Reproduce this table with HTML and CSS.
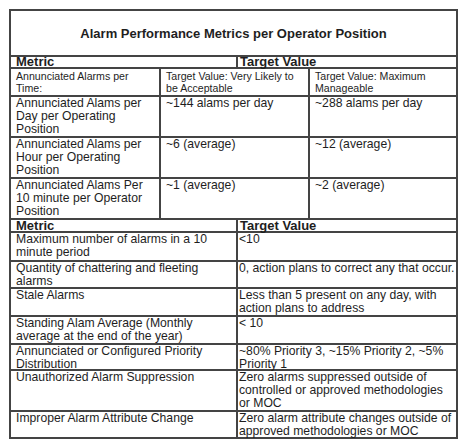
FILE: index.html
```html
<!DOCTYPE html>
<html>
<head>
<meta charset="utf-8">
<link rel="stylesheet" href="styles.css">
</head>
<body>
<div class="sheet">
  <div class="row title">Alarm Performance Metrics per Operator Position</div>
  <div class="row two head h12">
    <div class="cell">Metric</div>
    <div class="cell tv">Target Value</div>
  </div>
  <div class="row three sub h28">
    <div class="cell">Annunciated Alarms per Time:</div>
    <div class="cell">Target Value: Very Likely to be Acceptable</div>
    <div class="cell">Target Value: Maximum Manageable</div>
  </div>
  <div class="row three h41">
    <div class="cell">Annunciated Alams per Day per Operating Position</div>
    <div class="cell">~144 alams per day</div>
    <div class="cell">~288 alams per day</div>
  </div>
  <div class="row three h41">
    <div class="cell">Annunciated Alams per Hour per Operating Position</div>
    <div class="cell">~6 (average)</div>
    <div class="cell">~12 (average)</div>
  </div>
  <div class="row three h41">
    <div class="cell">Annunciated Alams Per 10 minute per Operator Position</div>
    <div class="cell">~1 (average)</div>
    <div class="cell">~2 (average)</div>
  </div>
  <div class="row two head h13">
    <div class="cell">Metric</div>
    <div class="cell tv">Target Value</div>
  </div>
  <div class="row two low h29">
    <div class="cell">Maximum number of alarms in a 10 minute period</div>
    <div class="cell">&lt;10</div>
  </div>
  <div class="row two low h27">
    <div class="cell">Quantity of chattering and fleeting alarms</div>
    <div class="cell">0, action plans to correct any that occur.</div>
  </div>
  <div class="row two low h28">
    <div class="cell">Stale Alarms</div>
    <div class="cell">Less than 5 present on any day, with action plans to address</div>
  </div>
  <div class="row two low h28">
    <div class="cell">Standing Alam Average (Monthly average at the end of the year)</div>
    <div class="cell">&lt; 10</div>
  </div>
  <div class="row two low h26">
    <div class="cell">Annunciated or Configured Priority Distribution</div>
    <div class="cell">~80% Priority 3, ~15% Priority 2, ~5% Priority 1</div>
  </div>
  <div class="row two low h41">
    <div class="cell">Unauthorized Alarm Suppression</div>
    <div class="cell">Zero alarms suppressed outside of controlled or approved methodologies or MOC</div>
  </div>
  <div class="row two low h27">
    <div class="cell">Improper Alarm Attribute Change</div>
    <div class="cell">Zero alarm attribute changes outside of approved methodologies or MOC</div>
  </div>
</div>
</body>
</html>
```

FILE: styles.css
```css
html, body {
  margin: 0;
  padding: 0;
  background: #ffffff;
}
body {
  padding: 9px 0 0 9px;
  font-family: "Liberation Sans", Arial, sans-serif;
  color: #1e1e1e;
}
.sheet {
  width: 449px;
  box-sizing: border-box;
  border: 2px solid #444444;
}
.row {
  box-sizing: border-box;
  border-top: 2px solid #444444;
  overflow: visible;
}
.row.title {
  border-top: none;
  height: 44px;
  display: flex;
  align-items: center;
  justify-content: center;
  font-weight: bold;
  font-size: 13px;
}
.two {
  display: grid;
  grid-template-columns: 225px 1fr;
}
.three {
  display: grid;
  grid-template-columns: 148px 149px 1fr;
}
.cell {
  box-sizing: border-box;
  font-size: 12.2px;
  line-height: 13px;
  padding: 0 2px 0 5px;
}
.cell + .cell {
  border-left: 2px solid #444444;
}
.three .cell + .cell {
  padding-left: 5px;
}
.two .cell + .cell {
  padding-left: 1px;
  padding-right: 0;
}
.head .cell {
  font-weight: bold;
  font-size: 13px;
  line-height: 10px;
  padding-top: 0;
}
.head .cell.tv {
  padding-left: 2px;
}
.h13 .cell {
  line-height: 11px;
}
.sub .cell {
  font-size: 10.6px;
  line-height: 12px;
  padding-top: 1px;
}
.h12 { height: 12px; }
.h13 { height: 13px; }
.h26 { height: 26px; }
.h27 { height: 27px; }
.h28 { height: 28px; }
.h29 { height: 29px; }
.h41 { height: 41px; }
```
